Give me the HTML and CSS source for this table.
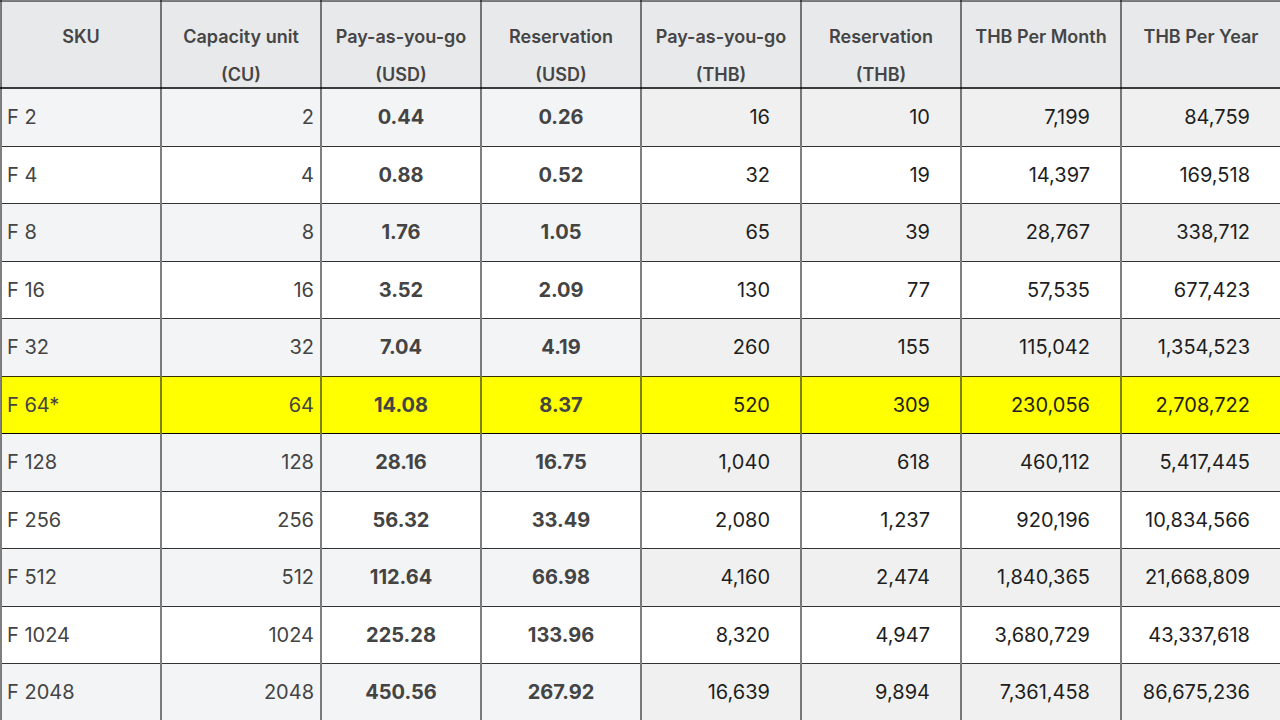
FILE: index.html
```html
<!DOCTYPE html>
<html>
<head>
<meta charset="utf-8">
<link rel="stylesheet" href="styles.css">
</head>
<body>
<table class="pricing">
  <colgroup>
    <col><col><col><col><col><col><col><col>
  </colgroup>
  <thead>
    <tr>
      <th><div class="hd">SKU</div></th>
      <th><div class="hd">Capacity unit<br>(CU)</div></th>
      <th><div class="hd">Pay-as-you-go<br>(USD)</div></th>
      <th><div class="hd">Reservation<br>(USD)</div></th>
      <th><div class="hd">Pay-as-you-go<br>(THB)</div></th>
      <th><div class="hd">Reservation<br>(THB)</div></th>
      <th><div class="hd">THB Per Month</div></th>
      <th><div class="hd">THB Per Year</div></th>
    </tr>
  </thead>
  <tbody>
    <tr class="alt"><td class="sku">F 2</td><td class="cu">2</td><td class="usd">0.44</td><td class="usd">0.26</td><td class="thb">16</td><td class="thb">10</td><td class="thb">7,199</td><td class="thb">84,759</td></tr>
    <tr><td class="sku">F 4</td><td class="cu">4</td><td class="usd">0.88</td><td class="usd">0.52</td><td class="thb">32</td><td class="thb">19</td><td class="thb">14,397</td><td class="thb">169,518</td></tr>
    <tr class="alt"><td class="sku">F 8</td><td class="cu">8</td><td class="usd">1.76</td><td class="usd">1.05</td><td class="thb">65</td><td class="thb">39</td><td class="thb">28,767</td><td class="thb">338,712</td></tr>
    <tr><td class="sku">F 16</td><td class="cu">16</td><td class="usd">3.52</td><td class="usd">2.09</td><td class="thb">130</td><td class="thb">77</td><td class="thb">57,535</td><td class="thb">677,423</td></tr>
    <tr class="alt"><td class="sku">F 32</td><td class="cu">32</td><td class="usd">7.04</td><td class="usd">4.19</td><td class="thb">260</td><td class="thb">155</td><td class="thb">115,042</td><td class="thb">1,354,523</td></tr>
    <tr class="hl"><td class="sku">F 64*</td><td class="cu">64</td><td class="usd">14.08</td><td class="usd">8.37</td><td class="thb">520</td><td class="thb">309</td><td class="thb">230,056</td><td class="thb">2,708,722</td></tr>
    <tr class="alt"><td class="sku">F 128</td><td class="cu">128</td><td class="usd">28.16</td><td class="usd">16.75</td><td class="thb">1,040</td><td class="thb">618</td><td class="thb">460,112</td><td class="thb">5,417,445</td></tr>
    <tr><td class="sku">F 256</td><td class="cu">256</td><td class="usd">56.32</td><td class="usd">33.49</td><td class="thb">2,080</td><td class="thb">1,237</td><td class="thb">920,196</td><td class="thb">10,834,566</td></tr>
    <tr class="alt"><td class="sku">F 512</td><td class="cu">512</td><td class="usd">112.64</td><td class="usd">66.98</td><td class="thb">4,160</td><td class="thb">2,474</td><td class="thb">1,840,365</td><td class="thb">21,668,809</td></tr>
    <tr><td class="sku">F 1024</td><td class="cu">1024</td><td class="usd">225.28</td><td class="usd">133.96</td><td class="thb">8,320</td><td class="thb">4,947</td><td class="thb">3,680,729</td><td class="thb">43,337,618</td></tr>
    <tr class="alt"><td class="sku">F 2048</td><td class="cu">2048</td><td class="usd">450.56</td><td class="usd">267.92</td><td class="thb">16,639</td><td class="thb">9,894</td><td class="thb">7,361,458</td><td class="thb">86,675,236</td></tr>
  </tbody>
</table>
</body>
</html>
```
FILE: styles.css
```css
html, body {
  margin: 0;
  padding: 0;
  background: #ffffff;
}

body {
  width: 1280px;
  height: 720px;
  overflow: hidden;
  font-family: Inter, "Liberation Sans", sans-serif;
}

.pricing {
  width: 1280px;
  table-layout: fixed;
  border-collapse: collapse;
}

.pricing col {
  width: 160px;
}

.pricing th,
.pricing td {
  border-left: 2px solid rgba(0, 0, 0, 0.5);
  border-right: 2px solid rgba(0, 0, 0, 0.5);
  padding: 0;
}

.pricing th {
  height: 85px;
  background: #e8e9eb;
  color: #454545;
  font-size: 18px;
  font-weight: 600;
  vertical-align: top;
  text-align: center;
  border-top: 2px solid rgba(0, 0, 0, 0.5);
  border-bottom: 2px solid rgba(0, 0, 0, 0.75);
}

.hd {
  height: 68px;
  padding-top: 16px;
  line-height: 38px;
  overflow: visible;
}

.pricing td {
  height: 56.5px;
  font-size: 20px;
  line-height: 24px;
  vertical-align: middle;
  border-bottom: 1px solid rgba(0, 0, 0, 0.8);
  color: #444444;
}

.pricing tbody tr:last-child td {
  border-bottom: 2px solid rgba(0, 0, 0, 0.5);
}

.pricing tr.alt td {
  background: #f3f4f6;
}

.pricing tr.alt td.thb {
  background: #f0f0f0;
}

.pricing tr.hl td,
.pricing tr.hl td.thb {
  background: #ffff00;
  border-bottom-color: #000;
}

.sku {
  text-align: left;
  padding-left: 5px !important;
}

.cu {
  text-align: right;
  padding-right: 6px !important;
}

.usd {
  text-align: center;
  font-weight: 700;
}

.thb {
  text-align: right;
  padding-right: 30px !important;
  color: #1e1e1e !important;
}
```
